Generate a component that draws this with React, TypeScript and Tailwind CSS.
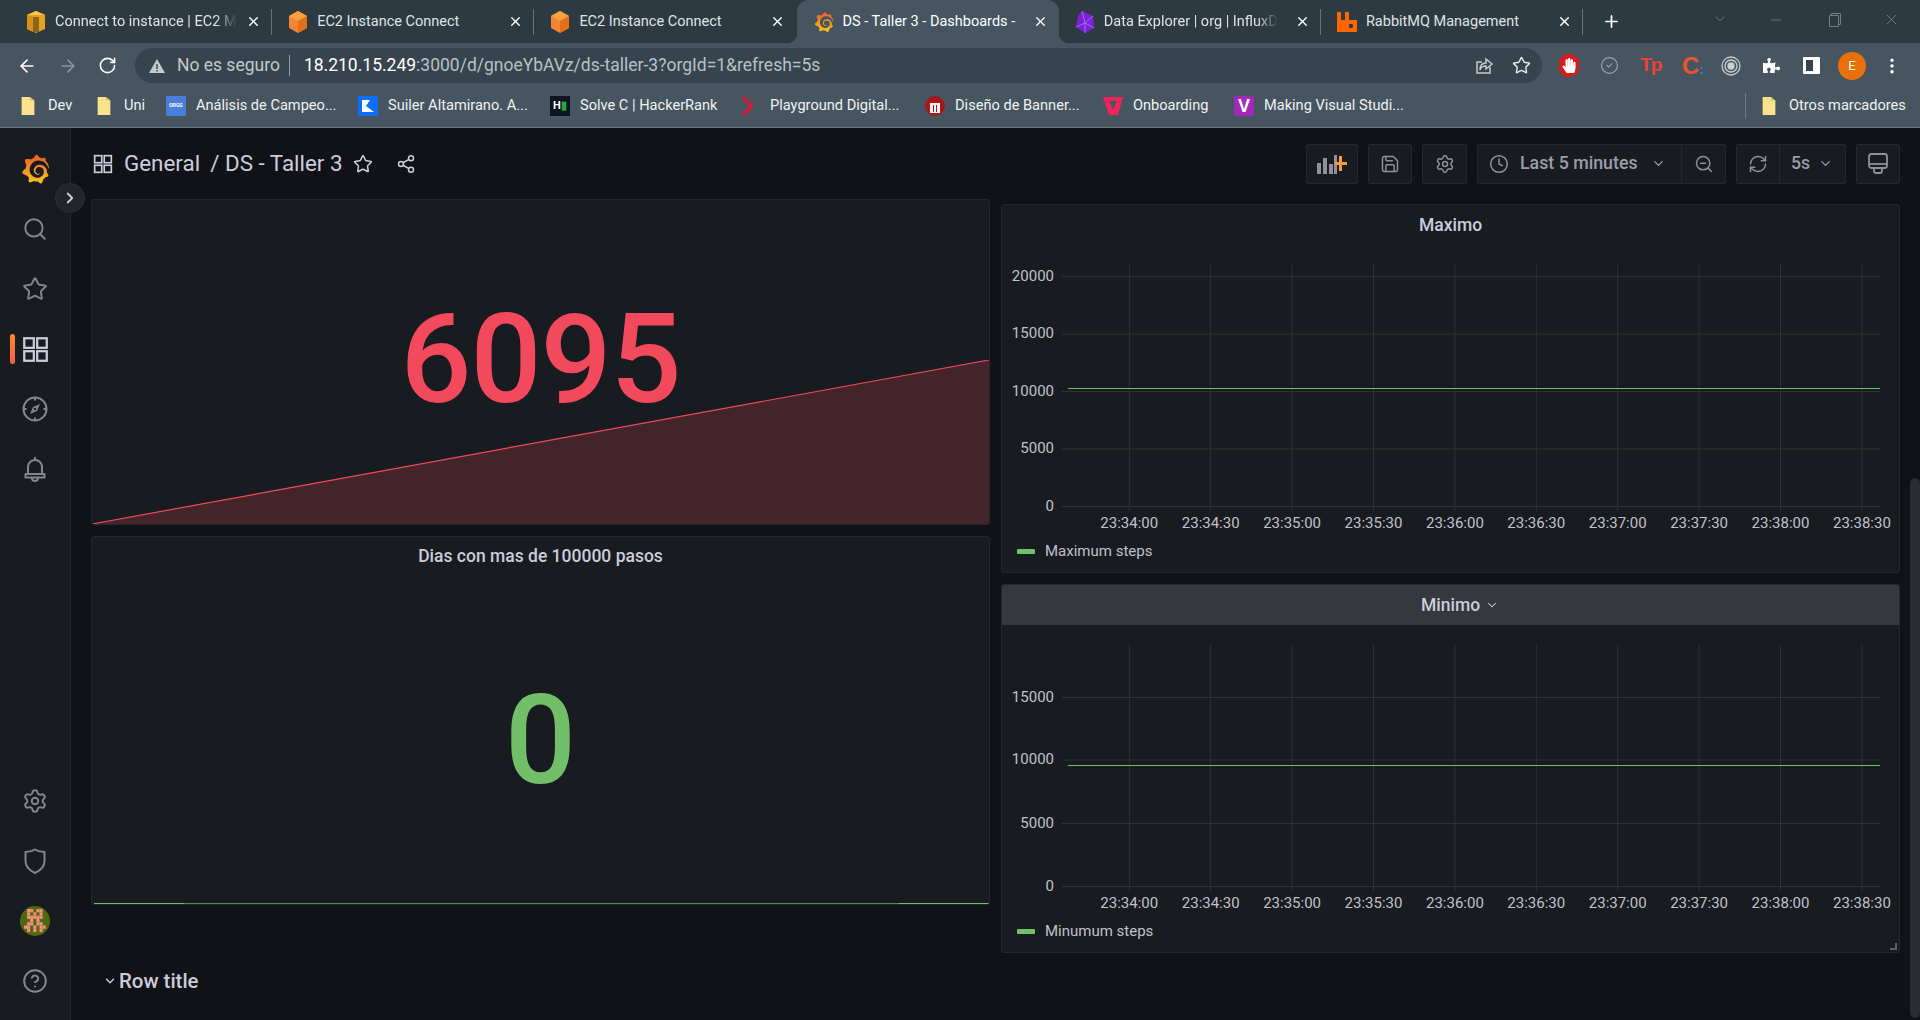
import { ArrowLeft, ArrowRight, RotateCw, RefreshCw, Star, Search, Settings, CircleHelp, ChevronDown, ChevronRight, Clock, ZoomOut, Save, Share2, CircleCheck, Plus, X, Minus, EllipsisVertical } from "lucide-react";
import { FaHandPaper, FaPuzzlePiece } from "react-icons/fa";
import { SiGrafana, SiRabbitmq } from "react-icons/si";

const font = "font-['Roboto','Liberation_Sans',sans-serif]";

function AwsCube() {
  return (
    <svg viewBox="0 0 20 24" className="w-[20px] h-[24px]">
      <path d="M10 1 19 5v14l-9 4-9-4V5z" fill="#e8a21c" />
      <path d="M10 5 1 5l9-4 9 4z" fill="#f7c948" />
      <path d="M7 7h6v15H7z" fill="#3a3320" opacity="0.55" />
      <path d="M1 5l6 2v15l-6-3z" fill="#d98f14" />
    </svg>
  );
}

function OrangeCube() {
  return (
    <svg viewBox="0 0 20 24" className="w-[20px] h-[24px]">
      <path d="M10 1 19 6v12l-9 5-9-5V6z" fill="#f58534" />
      <path d="M10 1 19 6l-9 5-9-5z" fill="#f9a03f" />
      <path d="M10 11l9-5v12l-9 5z" fill="#e2701b" />
    </svg>
  );
}

function InfluxIcon() {
  return (
    <svg viewBox="0 0 20 24" className="w-[20px] h-[24px]">
      <path d="M7 1 18 6l1 12-9 5-9-6 2-11z" fill="#7a22d6" />
      <path d="M7 1 10 13 1 17M10 13l9 5M10 13l8-7M10 13v10" stroke="#b276f2" strokeWidth="0.8" fill="none" />
    </svg>
  );
}

function GrafanaMark({ size }: { size: string }) {
  return <SiGrafana className={`${size} fill-[url(#grafana-grad)]`} />;
}

const tabs = [
  { title: "Connect to instance | EC2 M", icon: <AwsCube />, fade: true },
  { title: "EC2 Instance Connect", icon: <OrangeCube /> },
  { title: "EC2 Instance Connect", icon: <OrangeCube /> },
  { title: "DS - Taller 3 - Dashboards -", icon: <GrafanaMark size="w-[20px] h-[22px]" />, active: true },
  { title: "Data Explorer | org | InfluxD", icon: <InfluxIcon />, fade: true },
  { title: "RabbitMQ Management", icon: <SiRabbitmq className="w-[20px] h-[24px] text-[#ff6600]" /> },
];

function ChromeTabs() {
  return (
    <div className="h-[43px] bg-[#2e3a42] flex pl-[10px] relative">
      {tabs.map((t, i) => (
        <div key={i} className={t.active ? "relative w-[262.2px] h-full flex items-center pl-[17px] bg-[#46555f] rounded-t-[12px] text-white" : "relative w-[262.2px] h-full flex items-center pl-[16px] text-[#dfe3e6]"}>
          {t.active && <div className="absolute -left-[10px] bottom-0 w-[10px] h-[10px] bg-[radial-gradient(circle_at_0_0,#2e3a42_10px,#46555f_10.5px)]" />}
          {t.active && <div className="absolute -right-[10px] bottom-0 w-[10px] h-[10px] bg-[radial-gradient(circle_at_100%_0,#2e3a42_10px,#46555f_10.5px)]" />}
          <div className="w-[20px] flex justify-center shrink-0">{t.icon}</div>
          <div className={t.fade ? "ml-[9px] whitespace-nowrap text-[14.5px] [mask-image:linear-gradient(to_right,black_88%,transparent)]" : "ml-[9px] whitespace-nowrap text-[14.5px]"}>{t.title}</div>
          <X className="absolute left-[236px] w-[15px] h-[15px] text-white" strokeWidth={2.2} />
          {!t.active && i !== 2 && <div className="absolute right-0 top-[9px] h-[26px] w-px bg-[#66747d]" />}
        </div>
      ))}
      <Plus className="absolute left-[1602px] top-[12px] w-[19px] h-[19px] text-white" strokeWidth={2.2} />
      <ChevronDown className="absolute left-[1712px] top-[11px] w-[16px] h-[16px] text-[#76828a]" strokeWidth={1.2} />
      <Minus className="absolute left-[1768px] top-[12px] w-[16px] h-[16px] text-[#76828a]" strokeWidth={1.2} />
      <div className="absolute left-[1831px] top-[13px] w-[10px] h-[12px] border border-[#76828a] rounded-[1px]" />
      <div className="absolute left-[1829px] top-[15px] w-[10px] h-[12px] border border-[#76828a] rounded-[1px] bg-[#2e3a42]" />
      <X className="absolute left-[1883px] top-[11px] w-[17px] h-[17px] text-[#76828a]" strokeWidth={1.2} />
    </div>
  );
}

function ChromeToolbar() {
  return (
    <div className="h-[42px] bg-[#46555f] flex items-center pl-[17px] pr-[18px] pt-[3px]">
      <ArrowLeft className="w-[20px] h-[20px] text-white" strokeWidth={2} />
      <ArrowRight className="w-[20px] h-[20px] text-[#8b969d] ml-[21px]" strokeWidth={2} />
      <RotateCw className="w-[19px] h-[19px] text-white ml-[20px]" strokeWidth={2} />
      <div className="ml-[18px] w-[1409px] h-[35px] rounded-full bg-[#37444d] flex items-center pl-[14px] pr-[14px] text-[17.5px] relative">
        <svg viewBox="0 0 16 16" className="w-[16px] h-[16px]">
          <path d="M8 1 16 15H0z" fill="#c4c9cd" />
          <path d="M7.3 6h1.4v5H7.3zM7.3 12h1.4v1.4H7.3z" fill="#37444d" />
        </svg>
        <span className="ml-[12px] text-[#c4c9cd]">No es seguro</span>
        <div className="ml-[9px] w-px h-[21px] bg-[#8f9aa1]" />
        <span className="ml-[14px] text-white">18.210.15.249<span className="text-[#b9c0c5]">:3000/d/gnoeYbAVz/ds-taller-3?orgId=1&amp;refresh=5s</span></span>
        <svg viewBox="0 0 20 20" className="absolute left-[1339px] w-[20px] h-[20px]" fill="none" stroke="#c4c9cd" strokeWidth="1.5">
          <path d="M16 11v6H3V6h5" />
          <path d="M12 3l6 5-6 5V10c-3 0-5 1-6 4 0-4 2-7 6-7z" />
        </svg>
        <Star className="absolute left-[1377px] w-[19px] h-[19px] text-[#e6e9eb]" strokeWidth={1.8} />
      </div>
      <div className="ml-[17px] w-[20px] h-[23px] flex items-center justify-center bg-[#d81a1a] rounded-[9px]">
        <FaHandPaper className="w-[14px] h-[15px] text-white" />
      </div>
      <CircleCheck className="ml-[21px] w-[19px] h-[19px] text-[#98a2a9]" strokeWidth={1.5} />
      <span className="ml-[21px] w-[24px] text-[#ef4136] font-bold text-[19px] tracking-[-1px] font-['Liberation_Sans',sans-serif]">Tp</span>
      <span className="ml-[18px] w-[26px] font-bold text-[24px] font-['Liberation_Sans',sans-serif] text-[#f0532d]">C<span className="text-[#2a8fe0] text-[13px]">:</span></span>
      <svg viewBox="0 0 20 20" className="ml-[13px] w-[20px] h-[20px]" fill="none" stroke="#c9ced2" strokeWidth="1.3">
        <circle cx="10" cy="10" r="9" />
        <circle cx="10" cy="10" r="6" />
        <circle cx="10" cy="10" r="3" fill="#c9ced2" />
      </svg>
      <FaPuzzlePiece className="ml-[22px] w-[17px] h-[17px] text-white" />
      <div className="ml-[23px] w-[17px] h-[17px] border-[3px] border-white border-r-[7px] rounded-[1px] bg-[#37444d]" />
      <div className="ml-[18px] w-[28px] h-[28px] rounded-full bg-[#e8710a] flex items-center justify-center text-white text-[13px]">E</div>
      <EllipsisVertical className="ml-[16px] w-[20px] h-[20px] text-white" strokeWidth={2.2} />
    </div>
  );
}

function Folder() {
  return (
    <svg viewBox="0 0 16 22" className="w-[16px] h-[20px]">
      <path d="M1 1h9l5 4v16H1z" fill="#fbe38e" />
      <path d="M10 1v4h5z" fill="#e2c25c" />
    </svg>
  );
}

const bookmarks = [
  { label: "Dev", icon: <Folder />, cls: "ml-[20px] w-[76px]", textCls: "ml-[12px]" },
  { label: "Uni", icon: <Folder />, cls: "w-[70px]", textCls: "ml-[12px]" },
  { label: "Análisis de Campeo...", icon: <div className="w-[20px] h-[20px] bg-[#4a7fd9] rounded-[1px] text-white text-[5px] flex items-center justify-center font-bold">ORGG</div>, cls: "w-[192px]", textCls: "ml-[10px]" },
  { label: "Suiler Altamirano. A...", icon: <svg viewBox="0 0 20 20" className="w-[20px] h-[20px]"><rect width="20" height="20" fill="#0d6efd" /><path d="M4 4h8l-4 6 8 6H4z" fill="#fff" /></svg>, cls: "w-[192px]", textCls: "ml-[10px]" },
  { label: "Solve C | HackerRank", icon: <div className="w-[20px] h-[20px] bg-[#0e141e] text-white text-[11px] font-bold flex items-center justify-center">H<span className="text-[#1ba94c]">▮</span></div>, cls: "w-[190px]", textCls: "ml-[10px]" },
  { label: "Playground Digital...", icon: <svg viewBox="0 0 16 20" className="w-[15px] h-[20px]"><path d="M1 0h5l9 10-9 10H1l8-10z" fill="#c4203f" /></svg>, cls: "w-[185px]", textCls: "ml-[15px]" },
  { label: "Diseño de Banner...", icon: <svg viewBox="0 0 20 20" className="w-[20px] h-[20px]"><circle cx="10" cy="10" r="10" fill="#a81818" /><rect x="5" y="7" width="10" height="10" fill="#f2f2f2" /><rect x="8" y="9" width="1" height="7" fill="#a81818" /><rect x="11" y="9" width="1" height="7" fill="#a81818" /></svg>, cls: "w-[178px]", textCls: "ml-[10px]" },
  { label: "Onboarding", icon: <svg viewBox="0 0 20 20" className="w-[20px] h-[20px]"><path d="M0 1h20l-5 18H6z" fill="#f0245b" /><path d="M6 5h8l-4 9z" fill="#46555f" /></svg>, cls: "w-[131px]", textCls: "ml-[10px]" },
  { label: "Making Visual Studi...", icon: <div className="w-[20px] h-[20px] bg-[#a12bb6] text-white text-[18px] font-bold leading-[20px] text-center font-['Liberation_Sans',sans-serif]">V</div>, cls: "w-[511px]", textCls: "ml-[10px]" },
];

function BookmarksBar() {
  return (
    <div className="h-[43px] bg-[#46555f] flex items-center text-[14.6px] text-[#f0f2f3] border-b border-[#6c7a83] relative">
      {bookmarks.map((b) => (
        <div key={b.label} className={`flex items-center shrink-0 ${b.cls}`}>
          {b.icon}
          <span className={`whitespace-nowrap ${b.textCls}`}>{b.label}</span>
        </div>
      ))}
      <div className="w-px h-[26px] bg-[#6c7a83]" />
      <div className="ml-[15px] flex items-center">
        <Folder />
        <span className="ml-[12px] whitespace-nowrap">Otros marcadores</span>
      </div>
    </div>
  );
}

function DashGrid({ className }: { className: string }) {
  return (
    <svg viewBox="0 0 24 24" className={className} fill="none" stroke="currentColor" strokeWidth="2">
      <rect x="2" y="2" width="8.5" height="8.5" />
      <rect x="13.5" y="2" width="8.5" height="8.5" />
      <rect x="2" y="13.5" width="8.5" height="8.5" />
      <rect x="13.5" y="13.5" width="8.5" height="8.5" />
    </svg>
  );
}

function CompassIcon() {
  return (
    <svg viewBox="0 0 26 26" className="w-[26px] h-[26px]" fill="none" stroke="#85868c" strokeWidth="2">
      <circle cx="13" cy="13" r="11.5" />
      <path d="M13 1.5v3M13 21.5v3M1.5 13h3M21.5 13h3" />
      <path d="M18 8l-7 3-3 7 7-3z" fill="#85868c" stroke="none" />
      <circle cx="13" cy="13" r="1.2" fill="#181b1f" stroke="none" />
    </svg>
  );
}

function BellIcon() {
  return (
    <svg viewBox="0 0 24 26" className="w-[24px] h-[26px]" fill="none" stroke="#85868c" strokeWidth="2" strokeLinejoin="round">
      <path d="M12 1v3" />
      <path d="M5 18v-7a7 7 0 0 1 14 0v7" />
      <path d="M2.5 18h19v3.5h-19z" />
      <path d="M9 22a3 3 0 0 0 6 0" />
    </svg>
  );
}

function ShieldIcon() {
  return (
    <svg viewBox="0 0 24 26" className="w-[24px] h-[26px]" fill="none" stroke="#85868c" strokeWidth="2" strokeLinejoin="round">
      <path d="M12 1.5c3 2 6 2.5 9.5 2.5v9c0 5-4 9.500-9.500 12-5.500-2.500-9.500-7-9.500-12V4C6 4 9 3.500 12 1.500z" />
    </svg>
  );
}

function Avatar() {
  const rows = ["0110110", "0101010", "0111110", "0010100", "0110110", "1101011", "0101010"];
  return (
    <svg viewBox="0 0 30 30" className="w-[30px] h-[30px] rounded-full bg-[#4c6a10]">
      {rows.map((r, y) => r.split("").map((c, x) => c === "1" && <rect key={`${x}-${y}`} x={4 + x * 3.1} y={3 + y * 3.3} width="3.1" height="3.3" fill="#f98d7c" />))}
    </svg>
  );
}

function Sidebar() {
  const iconCls = "w-[26px] h-[26px] text-[#85868c]";
  return (
    <aside className="w-[71px] shrink-0 bg-[#181b1f] border-r border-[#24272c] flex flex-col items-center relative">
      <div className="h-[60px] mt-[11px] flex items-center justify-center"><GrafanaMark size="w-[29px] h-[30px]" /></div>
      <div className="h-[60px] flex items-center"><Search className={iconCls} strokeWidth={1.8} /></div>
      <div className="h-[60px] flex items-center"><Star className={iconCls} strokeWidth={1.8} /></div>
      <div className="h-[60px] flex items-center relative w-full justify-center">
        <div className="absolute left-[10px] top-[15px] w-[5px] h-[30px] rounded-full bg-[linear-gradient(#ff8833,#f55f3e)]" />
        <DashGrid className="w-[27px] h-[27px] text-[#ccccdc]" />
      </div>
      <div className="h-[60px] flex items-center"><CompassIcon /></div>
      <div className="h-[60px] flex items-center"><BellIcon /></div>
      <div className="mt-auto mb-[9px] flex flex-col items-center">
        <div className="h-[60px] flex items-center"><Settings className={iconCls} strokeWidth={1.8} /></div>
        <div className="h-[60px] flex items-center"><ShieldIcon /></div>
        <div className="h-[60px] flex items-center"><Avatar /></div>
        <div className="h-[60px] flex items-center"><CircleHelp className={iconCls} strokeWidth={1.8} /></div>
      </div>
      <div className="absolute left-[55px] top-[55px] w-[30px] h-[30px] rounded-full bg-[#22252b] border border-[#2c2f35] flex items-center justify-center z-10">
        <ChevronRight className="w-[18px] h-[18px] text-[#ccccdc]" strokeWidth={2.4} />
      </div>
    </aside>
  );
}

function ToolbarBtn({ children, cls }: { children: React.ReactNode; cls: string }) {
  return <div className={`h-[40px] bg-[#181b1f] border border-[#24272c] rounded-[2px] flex items-center justify-center shrink-0 ${cls}`}>{children}</div>;
}

function DashboardHeader() {
  const ic = "w-[20px] h-[20px] text-[#8f9099]";
  return (
    <div className="h-[71px] shrink-0 flex items-center pl-[22px] pr-[20px]">
      <DashGrid className="w-[20px] h-[20px] text-[#ccccdc]" />
      <span className="ml-[11px] text-[22.4px] text-[#ccccdc]">General</span>
      <span className="ml-[10px] text-[22.4px] text-[#ccccdc]">/ DS - Taller 3</span>
      <Star className="ml-[10px] w-[20px] h-[20px] text-[#ccccdc]" strokeWidth={1.8} />
      <Share2 className="ml-[23px] w-[20px] h-[20px] text-[#ccccdc]" strokeWidth={1.8} />
      <div className="ml-auto flex items-center gap-[10px]">
        <ToolbarBtn cls="w-[52px]">
          <svg viewBox="0 0 30 20" className="w-[30px] h-[20px]">
            <path d="M0 9h4v11H0zM6 4h4v16H6zM12 10h4v10h-4zM17 1h3v19h-3z" fill="#8f9099" />
            <path d="M22 2h3v6h5v3h-5v6h-3v-6h-4V8h4z" fill="#ff9830" />
          </svg>
        </ToolbarBtn>
        <ToolbarBtn cls="w-[44px]"><Save className={ic} strokeWidth={1.8} /></ToolbarBtn>
        <ToolbarBtn cls="w-[45px]"><Settings className={ic} strokeWidth={1.8} /></ToolbarBtn>
        <div className="flex h-[40px] w-[249px] bg-[#181b1f] border border-[#24272c] rounded-[2px] shrink-0">
          <div className="w-[204px] flex items-center pl-[11px] border-r border-[#24272c]">
            <Clock className={ic} strokeWidth={1.8} />
            <span className="ml-[11px] text-[17.8px] font-medium text-[#9a9ea8] whitespace-nowrap">Last 5 minutes</span>
            <ChevronDown className="ml-[13px] w-[15px] h-[15px] text-[#9a9ea8]" strokeWidth={2} />
          </div>
          <div className="flex-1 flex items-center justify-center"><ZoomOut className={ic} strokeWidth={1.8} /></div>
        </div>
        <div className="flex h-[40px] w-[110px] bg-[#181b1f] border border-[#24272c] rounded-[2px] shrink-0">
          <div className="w-[43px] flex items-center justify-center border-r border-[#24272c]"><RefreshCw className={ic} strokeWidth={1.8} /></div>
          <div className="flex-1 flex items-center pl-[11px]">
            <span className="text-[17.8px] font-medium text-[#9a9ea8]">5s</span>
            <ChevronDown className="ml-[8px] w-[15px] h-[15px] text-[#9a9ea8]" strokeWidth={2} />
          </div>
        </div>
        <ToolbarBtn cls="w-[44px]">
          <svg viewBox="0 0 20 22" className="w-[20px] h-[22px]" fill="none" stroke="#8f9099" strokeWidth="1.8" strokeLinejoin="round">
            <rect x="1" y="1" width="18" height="14" rx="2.500" />
            <path d="M1 11h18" />
            <path d="M6 15v3a2 2 0 0 0 2 2h4a2 2 0 0 0 2-2v-3" />
          </svg>
        </ToolbarBtn>
      </div>
    </div>
  );
}

const times = ["23:34:00", "23:34:30", "23:35:00", "23:35:30", "23:36:00", "23:36:30", "23:37:00", "23:37:30", "23:38:00", "23:38:30"];
const gridXs = times.map((_, i) => 128.3 + i * 81.4);

function TimeChart({ ticks, dataY }: { ticks: { label: string; y: number }[]; dataY: number }) {
  return (
    <svg viewBox="1 0 897 291" className="block w-[897px] h-[291px]">
      {ticks.map((t) => (
        <g key={t.label}>
          <line x1="61" x2="879" y1={t.y + 0.5} y2={t.y + 0.5} stroke="#2e3135" />
          <text x="53" y={t.y + 4.5} textAnchor="end" fontSize="15" fill="#c0c1cc">{t.label}</text>
        </g>
      ))}
      {gridXs.map((x, i) => (
        <g key={i}>
          <line x1={x} x2={x} y1="20" y2="266" stroke="#2e3135" />
          <text x={x} y="283" textAnchor="middle" fontSize="15" fill="#c0c1cc">{times[i]}</text>
        </g>
      ))}
      <line x1="67" x2="879" y1={dataY} y2={dataY} stroke="#73bf69" strokeWidth="1.2" />
    </svg>
  );
}

function Legend({ label }: { label: string }) {
  return (
    <div className="h-[30px] flex items-center pl-[15px] text-[15px] text-[#c0c1cc]">
      <div className="w-[18px] h-[5px] bg-[#73bf69] rounded-[1px]" />
      <span className="ml-[10px]">{label}</span>
    </div>
  );
}

function Panel({ cls, children }: { cls: string; children: React.ReactNode }) {
  return <div className={`bg-[#181b1f] border border-[#24272c] rounded-[3px] relative overflow-hidden shrink-0 ${cls}`}>{children}</div>;
}

function LeftColumn() {
  return (
    <div className="w-[899px] flex flex-col gap-[11px]">
      <Panel cls="h-[326px]">
        <div className="h-[319px] flex items-center justify-center text-[125px] leading-none font-medium text-[#f2495c] tracking-[-1px] relative z-10">6095</div>
        <svg viewBox="0 0 899 164" preserveAspectRatio="none" className="absolute left-0 bottom-0 w-full h-[164px]">
          <path d="M0 164 899 0V164z" fill="#f2495c" fillOpacity="0.2" />
          <path d="M0 164 899 0" stroke="#f2495c" strokeWidth="1.2" fill="none" />
        </svg>
      </Panel>
      <Panel cls="h-[369px]">
        <div className="h-[32px] flex items-end justify-center text-[17.5px] font-medium text-[#ccccdc]">Dias con mas de 100000 pasos</div>
        <div className="h-[342px] flex items-center justify-center text-[125px] leading-none font-medium text-[#73bf69]">0</div>
        <div className="absolute left-[2px] right-0 bottom-0 h-px bg-[#4c9143]" />
        <div className="absolute left-[2px] bottom-0 h-px w-[90px] bg-[#73bf69]" />
        <div className="absolute right-0 bottom-0 h-px w-[90px] bg-[#73bf69]" />
      </Panel>
    </div>
  );
}

function RightColumn() {
  return (
    <div className="w-[899px] flex flex-col gap-[11px] pt-[5px]">
      <Panel cls="h-[369px]">
        <div className="h-[40px] flex items-center justify-center text-[17.5px] font-medium text-[#ccccdc]">Maximo</div>
        <TimeChart dataY={143.5} ticks={[{ label: "0", y: 261 }, { label: "5000", y: 203.5 }, { label: "10000", y: 146 }, { label: "15000", y: 88.5 }, { label: "20000", y: 31 }]} />
        <Legend label="Maximum steps" />
      </Panel>
      <Panel cls="h-[369px]">
        <div className="h-[40px] bg-[#35383d] flex items-center justify-center pl-[19px] text-[17.5px] font-medium text-[#ccccdc]">
          Minimo
          <ChevronDown className="ml-[5px] w-[14px] h-[14px]" strokeWidth={1.8} />
        </div>
        <TimeChart dataY={140.5} ticks={[{ label: "0", y: 261 }, { label: "5000", y: 198 }, { label: "10000", y: 134.5 }, { label: "15000", y: 72 }]} />
        <Legend label="Minumum steps" />
        <div className="absolute right-[2px] bottom-[2px] w-[7px] h-[7px] border-r-2 border-b-2 border-[#5c5e63]" />
      </Panel>
    </div>
  );
}

export default function App() {
  return (
    <div className={`w-[1920px] h-[1020px] overflow-hidden flex flex-col bg-[#111217] relative ${font}`}>
      <svg className="absolute w-0 h-0">
        <defs>
          <linearGradient id="grafana-grad" x1="0" y1="1" x2="0" y2="0">
            <stop offset="0" stopColor="#fbc51c" />
            <stop offset="1" stopColor="#f05a28" />
          </linearGradient>
        </defs>
      </svg>
      <ChromeTabs />
      <ChromeToolbar />
      <BookmarksBar />
      <div className="flex-1 flex min-h-0">
        <Sidebar />
        <main className="flex-1 min-w-0 flex flex-col">
          <DashboardHeader />
          <div className="flex gap-[11px] pl-[20px] shrink-0">
            <LeftColumn />
            <RightColumn />
          </div>
          <div className="mt-[13px] pl-[32px] flex items-center text-[#ccccdc] shrink-0">
            <ChevronDown className="w-[14px] h-[14px]" strokeWidth={2.4} />
            <span className="ml-[2px] text-[20.4px] font-medium">Row title</span>
          </div>
        </main>
      </div>
      <div className="absolute right-0 top-[478px] bottom-[2px] w-[10px] bg-[#2a2c31] rounded-[5px]" />
    </div>
  );
}
